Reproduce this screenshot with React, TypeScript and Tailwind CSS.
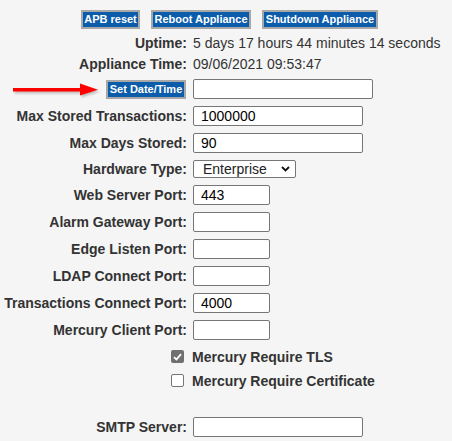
import React from "react";

const label = "text-right text-[14px] leading-4 font-bold text-[#333]";
const font = { fontFamily: '"Liberation Sans", Arial, sans-serif' };

function Btn({ text, w }: { text: string; w: string }) {
  return (
    <button
      type="button"
      className={`${w} h-[19px] flex items-center justify-center border-2 border-[#a8a8a8] bg-[#0b5cab] text-white text-[11px] leading-[13px] font-bold whitespace-nowrap`}
    >
      {text}
    </button>
  );
}

function Row({ name, children, className = "mt-[7px]" }: { name: React.ReactNode; children: React.ReactNode; className?: string }) {
  return (
    <div className={`flex items-center ${className}`}>
      <div className={`w-[187px] shrink-0 flex justify-end ${label}`}>{name}</div>
      <div className="ml-[6px] flex items-center">{children}</div>
    </div>
  );
}

function Field({ w, value = "" }: { w: string; value?: string }) {
  return (
    <input
      defaultValue={value}
      className={`${w} h-[20px] block border border-[#767676] rounded-[2px] bg-white pl-[7px] text-[14px] leading-4 text-black outline-none`}
      style={font}
    />
  );
}

function Check({ checked }: { checked?: boolean }) {
  return checked ? (
    <span className="w-[13px] h-[13px] rounded-[2px] bg-[#707070] flex items-center justify-center">
      <svg width="9" height="8" viewBox="0 0 9 8">
        <path d="M1 4.2 L3.4 6.5 L8 1.2" stroke="white" strokeWidth="1.8" fill="none" />
      </svg>
    </span>
  ) : (
    <span className="block w-[13px] h-[13px] rounded-[2px] bg-white border border-[#767676]" />
  );
}

export default function App() {
  return (
    <div className="relative w-[452px] h-[441px] overflow-hidden bg-[#f5f5f5]" style={font}>
      <svg className="absolute left-[10px] top-[80px]" width="96" height="20" viewBox="0 0 96 20">
        <defs>
          <filter id="sh" x="-10%" y="-50%" width="130%" height="200%">
            <feGaussianBlur stdDeviation="1.2" />
          </filter>
        </defs>
        <g transform="translate(1.5 2)" fill="#9a9a9a" opacity="0.6" filter="url(#sh)">
          <rect x="3" y="8" width="70" height="3.5" />
          <path d="M70 3.5 L88 9.7 L70 15.5 Z" />
        </g>
        <rect x="3" y="8" width="70" height="3.5" fill="#ff0000" />
        <path d="M70 3.5 L88 9.7 L70 15.5 Z" fill="#ff0000" />
      </svg>

      <div className="flex pt-[10px] pl-[81px] gap-[11px]">
        <Btn text="APB reset" w="w-[59px]" />
        <Btn text="Reboot Appliance" w="w-[100px]" />
        <Btn text="Shutdown Appliance" w="w-[116px]" />
      </div>

      <Row name="Uptime:" className="mt-[6px]">
        <span className="text-[14px] leading-4 text-[#333] whitespace-nowrap">5 days 17 hours 44 minutes 14 seconds</span>
      </Row>
      <Row name="Appliance Time:" className="mt-[5px]">
        <span className="text-[14px] leading-4 text-[#333] whitespace-nowrap">09/06/2021 09:53:47</span>
      </Row>
      <Row name={<span className="block mr-[1px] mt-[1px]"><Btn text="Set Date/Time" w="w-[80px]" /></span>}>
        <Field w="w-[180px]" />
      </Row>
      <Row name="Max Stored Transactions:">
        <Field w="w-[170px]" value="1000000" />
      </Row>
      <Row name="Max Days Stored:">
        <Field w="w-[170px]" value="90" />
      </Row>
      <Row name="Hardware Type:">
        <div className="relative">
          <select
            defaultValue="Enterprise"
            className="block appearance-none w-[103px] h-[18px] border border-[#767676] rounded-[2px] bg-white pl-[9px] text-[14px] leading-4 text-[#222] outline-none"
            style={font}
          >
            <option>Enterprise</option>
            <option>Standard</option>
          </select>
          <svg className="absolute right-[6px] top-[6px] pointer-events-none" width="9" height="6" viewBox="0 0 9 6">
            <path d="M1 1 L4.5 4.5 L8 1" stroke="#111" strokeWidth="1.8" fill="none" />
          </svg>
        </div>
      </Row>
      <Row name="Web Server Port:">
        <Field w="w-[77px]" value="443" />
      </Row>
      <Row name="Alarm Gateway Port:">
        <Field w="w-[77px]" />
      </Row>
      <Row name="Edge Listen Port:">
        <Field w="w-[77px]" />
      </Row>
      <Row name="LDAP Connect Port:">
        <Field w="w-[77px]" />
      </Row>
      <Row name="Transactions Connect Port:">
        <Field w="w-[77px]" value="4000" />
      </Row>
      <Row name="Mercury Client Port:">
        <Field w="w-[77px]" />
      </Row>

      <Row name={<span className="block mr-[3px]"><Check checked /></span>} className="mt-[10px] h-[13px]">
        <span className="-ml-[1px] text-[14px] leading-4 font-bold text-[#333] whitespace-nowrap">Mercury Require TLS</span>
      </Row>
      <Row name={<span className="block mr-[3px]"><Check /></span>} className="mt-[11px] h-[13px]">
        <span className="-ml-[1px] text-[14px] leading-4 font-bold text-[#333] whitespace-nowrap">Mercury Require Certificate</span>
      </Row>

      <Row name="SMTP Server:" className="mt-[30px]">
        <Field w="w-[170px]" />
      </Row>
    </div>
  );
}
